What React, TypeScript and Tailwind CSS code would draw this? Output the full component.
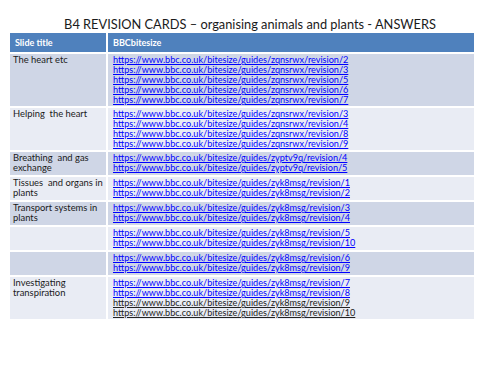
import React from "react";

const base = "https://www.bbc.co.uk/bitesize/guides/";

type Row = { title: string; links: string[]; dark: boolean; visited?: number[] };

const rows: Row[] = [
  { title: "The heart etc", dark: true, links: ["zqnsrwx/revision/2", "zqnsrwx/revision/3", "zqnsrwx/revision/5", "zqnsrwx/revision/6", "zqnsrwx/revision/7"] },
  { title: "Helping  the heart", dark: false, links: ["zqnsrwx/revision/3", "zqnsrwx/revision/4", "zqnsrwx/revision/8", "zqnsrwx/revision/9"] },
  { title: "Breathing  and gas exchange", dark: true, links: ["zyptv9q/revision/4", "zyptv9q/revision/5"] },
  { title: "Tissues  and organs in plants", dark: false, links: ["zyk8msg/revision/1", "zyk8msg/revision/2"] },
  { title: "Transport systems in plants", dark: true, links: ["zyk8msg/revision/3", "zyk8msg/revision/4"] },
  { title: "", dark: false, links: ["zyk8msg/revision/5", "zyk8msg/revision/10"] },
  { title: "", dark: true, links: ["zyk8msg/revision/6", "zyk8msg/revision/9"] },
  { title: "Investigating transpiration", dark: false, links: ["zyk8msg/revision/7", "zyk8msg/revision/8", "zyk8msg/revision/9", "zyk8msg/revision/10"], visited: [2, 3] },
];

export default function App() {
  return (
    <div className="w-[500px] h-[375px] bg-white" style={{ fontFamily: "Lato, 'Open Sans', sans-serif" }}>
      <div className="pt-[16px] h-[33px] text-center text-[12.8px] leading-[16px] text-[#1a1a1a]">
        B4 REVISION CARDS – organising animals and plants - ANSWERS
      </div>
      <div className="ml-[10px] w-[464px] grid grid-cols-[96px_1fr] gap-[2px]">
        <div className="h-[19px] bg-[#4f81bd] text-white font-bold text-[9px] leading-[19px] pl-[5px]">Slide title</div>
        <div className="h-[19px] bg-[#4f81bd] text-white font-bold text-[9px] leading-[19px] pl-[5px]">BBCbitesize</div>
        {rows.map((r, i) => (
          <React.Fragment key={i}>
            <div className={`${r.dark ? "bg-[#cfd6e6]" : "bg-[#e9ecf4]"} pl-[3px] pt-[1px] text-[9.4px] leading-[10px] text-[#1a1a1a] whitespace-pre-wrap`}>
              {r.title}
            </div>
            <div className={`${r.dark ? "bg-[#cfd6e6]" : "bg-[#e9ecf4]"} pl-[5px] pt-[1px] ${r.links.length === 2 ? "pb-[2px]" : "pb-[1px]"} flex flex-col`}>
              {r.links.map((l, j) => (
                <span
                  key={j}
                  className={`text-[9.1px] leading-[10px] underline ${r.visited && r.visited.includes(j) ? "text-[#222222]" : "text-[#0000ff]"}`}
                >
                  {base + l}
                </span>
              ))}
            </div>
          </React.Fragment>
        ))}
      </div>
    </div>
  );
}
